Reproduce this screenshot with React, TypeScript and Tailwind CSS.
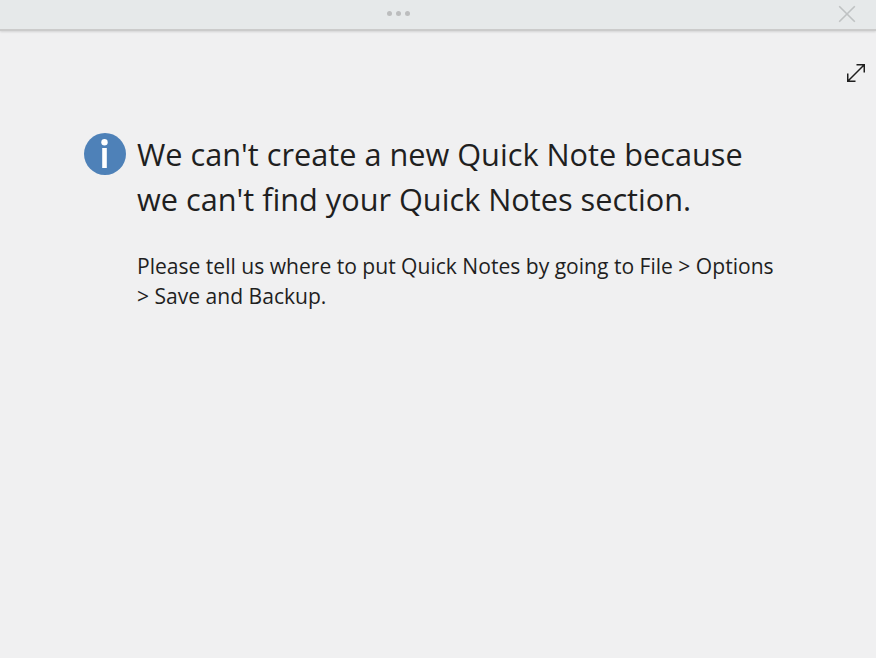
export default function App() {
  return (
    <div className="h-[658px] w-[876px] overflow-hidden bg-[#f0f0f1] text-[#1f1f1f] font-['Open_Sans','Noto_Sans',sans-serif]">
      <div className="relative flex h-[31px] items-center bg-[#e6e9ea] border-b-2 border-[#cbcbcb] pl-[387px] shadow-[0_1px_2px_rgba(0,0,0,0.12)]">
        <div className="flex gap-[4px] pb-[3px]">
          <span className="size-[5px] rounded-full bg-[#bcbdbe]" />
          <span className="size-[5px] rounded-full bg-[#bcbdbe]" />
          <span className="size-[5px] rounded-full bg-[#bcbdbe]" />
        </div>
        <svg className="absolute left-[838px] top-[5px]" width="18" height="18" viewBox="0 0 18 18" fill="none" stroke="#bfc2c3" strokeWidth="1.6">
          <path d="M1.2 1.2 16.8 16.8M16.8 1.2 1.2 16.8" />
        </svg>
      </div>
      <div className="flex justify-end pt-[32px] pr-[10px]">
        <svg width="20" height="20" viewBox="0 0 20 20" fill="none" stroke="#1f1f1f" strokeWidth="1.5">
          <path d="M2 18 18 2M10.5 1.75H18.25V9.5M1.75 10.5V18.25H9.5" />
        </svg>
      </div>
      <div className="flex gap-[11px] pl-[84px] pt-[49px]">
        <svg className="mt-[1px] shrink-0" width="42" height="42" viewBox="0 0 42 42">
          <circle cx="21" cy="21" r="21" fill="#4e81b8" />
          <circle cx="20.5" cy="9.2" r="3.2" fill="#fff" />
          <rect x="18.2" y="15" width="4.6" height="20" fill="#fff" />
        </svg>
        <div className="w-[650px]">
          <h1 className="text-[30.7px] font-normal leading-[45px]">We can't create a new Quick Note because<br />we can't find your Quick Notes section.</h1>
          <p className="mt-[29px] text-[21.07px] leading-[30px]">Please tell us where to put Quick Notes by going to File &gt; Options<br />&gt; Save and Backup.</p>
        </div>
      </div>
    </div>
  );
}
